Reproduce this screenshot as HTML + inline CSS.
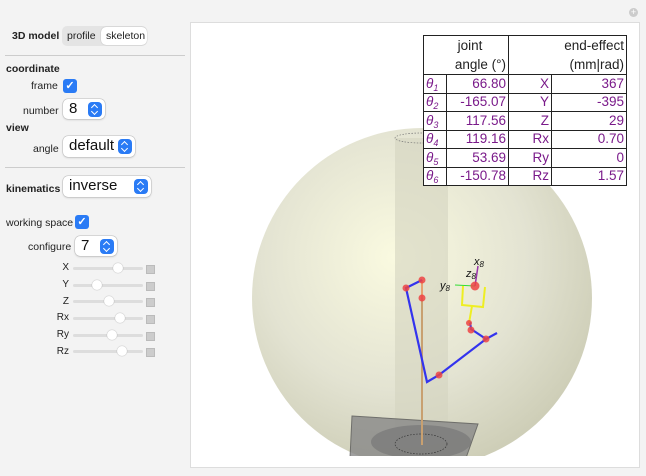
<!DOCTYPE html>
<html><head><style>
body{margin:0;width:646px;height:476px;background:#f3f3f3;font-family:"Liberation Sans",sans-serif;position:relative;overflow:hidden}
.a{position:absolute;font-size:10.5px;color:#222}
.b{font-weight:bold}
.sel{position:absolute;background:#fff;border-radius:5px;box-shadow:0 0 0 0.5px #bbb,0 1px 2px rgba(0,0,0,.15);font-size:15px;color:#111}
.sel span{position:absolute;left:6px;top:1px}
.sel i{position:absolute;right:3px;top:3px;width:14px;height:15px;background:#2a7bf5;border-radius:4px}
.sel i:before,.sel i:after{content:"";position:absolute;left:4px;width:4px;height:4px;border:solid #fff;border-width:1.3px 0 0 1.3px}
.sel i:before{top:3px;transform:rotate(45deg)}
.sel i:after{top:7px;transform:rotate(225deg)}
.cb{position:absolute;width:14px;height:14px;background:#2a7bf5;border-radius:3px;color:#fff;font-size:11px;line-height:14px;text-align:center;font-weight:bold}
.hr{position:absolute;left:5px;width:180px;height:1px;background:#ccc}
.sl{position:absolute;left:73px;width:70px;height:3px;background:#ddd;border-radius:2px}
.sl b{position:absolute;top:-4px;width:10px;height:10px;border-radius:50%;background:#fff;box-shadow:0 0 1px #888}
.pl{position:absolute;left:146px;width:7px;height:7px;background:#ccc;border:0.5px solid #bbb;}
.lb{position:absolute;font-size:10px;color:#222;text-align:right;width:20px}
table{position:absolute;left:423px;top:35px;border-collapse:collapse;font-size:13.5px;color:#7a1a8a;background:#fff}
td{border:1px solid #222;padding:0 2px;height:17.5px;text-align:right;line-height:16px}
td.t{font-style:italic;text-align:left}
sub{font-size:9px;line-height:0;vertical-align:-3px}
</style></head><body>
<div class="a b" style="left:12px;top:30px">3D model</div>
<div style="position:absolute;left:62px;top:26px;width:85px;height:20px;background:#e4e4e4;border-radius:5px"></div>
<div class="a" style="left:67px;top:30px">profile</div>
<div style="position:absolute;left:101px;top:27px;width:46px;height:18px;background:#fff;border-radius:5px;box-shadow:0 0 1px #999"></div>
<div class="a" style="left:106px;top:30px">skeleton</div>
<div class="hr" style="top:55px"></div>
<div class="a b" style="left:6px;top:63px">coordinate</div>
<div class="a" style="left:31px;top:80px">frame</div>
<div class="cb" style="left:63px;top:79px">✓</div>
<div class="a" style="left:23px;top:105px">number</div>
<div class="sel" style="left:63px;top:99px;width:42px;height:20px"><span>8</span><i></i></div>
<div class="a b" style="left:6px;top:122px">view</div>
<div class="a" style="left:33px;top:143px">angle</div>
<div class="sel" style="left:63px;top:136px;width:72px;height:21px"><span>default</span><i></i></div>
<div class="hr" style="top:167px"></div>
<div class="a b" style="left:6px;top:183px">kinematics</div>
<div class="sel" style="left:63px;top:176px;width:88px;height:21px"><span>inverse</span><i></i></div>
<div class="a" style="left:6px;top:217px">working space</div>
<div class="cb" style="left:75px;top:215px">✓</div>
<div class="a" style="left:28px;top:241px">configure</div>
<div class="sel" style="left:75px;top:236px;width:42px;height:20px"><span>7</span><i></i></div>
<div class="lb" style="left:49px;top:262px">X</div><div class="sl" style="top:267px"><b style="left:40px"></b></div><div class="pl" style="top:265px"></div>
<div class="lb" style="left:49px;top:279px">Y</div><div class="sl" style="top:284px"><b style="left:19px"></b></div><div class="pl" style="top:282px"></div>
<div class="lb" style="left:49px;top:296px">Z</div><div class="sl" style="top:300px"><b style="left:31px"></b></div><div class="pl" style="top:298px"></div>
<div class="lb" style="left:49px;top:312px">Rx</div><div class="sl" style="top:317px"><b style="left:42px"></b></div><div class="pl" style="top:315px"></div>
<div class="lb" style="left:49px;top:329px">Ry</div><div class="sl" style="top:334px"><b style="left:34px"></b></div><div class="pl" style="top:332px"></div>
<div class="lb" style="left:49px;top:346px">Rz</div><div class="sl" style="top:350px"><b style="left:44px"></b></div><div class="pl" style="top:348px"></div>
<div style="position:absolute;left:629px;top:8px;width:9px;height:9px;border-radius:50%;background:#ccc;color:#fff;font-size:9px;line-height:9px;text-align:center">+</div>
<div style="position:absolute;left:190px;top:22px;width:450px;height:446px;background:#fff;border:1px solid #ddd;box-sizing:border-box;overflow:hidden">
<svg width="450" height="434" viewBox="190 22 450 434" style="position:absolute;left:-1px;top:-1px">
<defs><radialGradient id="g" cx="0.42" cy="0.38" r="0.65"><stop offset="0" stop-color="#fafae0"/><stop offset="0.6" stop-color="#e3e3d2"/><stop offset="1" stop-color="#cdcdb6"/></radialGradient></defs>
<circle cx="422" cy="298" r="170" fill="url(#g)"/>
<rect x="395" y="138" width="53" height="330" fill="#d4d4c0" opacity="0.6"/>
<ellipse cx="421" cy="138" rx="26" ry="5" fill="none" stroke="#777" stroke-dasharray="1.5,1.5" stroke-width="0.7"/>
<polygon points="352,416 478,424 466,458 350,458" fill="#888" opacity="0.8" stroke="#555"/>
<ellipse cx="421" cy="442" rx="50" ry="17" fill="#777" opacity="0.7"/>
<ellipse cx="421" cy="444" rx="26" ry="10" fill="none" stroke="#333" stroke-dasharray="1.5,1.5" stroke-width="0.7"/>
<line x1="422" y1="298" x2="422" y2="445" stroke="#c8a070" stroke-width="2"/>
<line x1="422" y1="280" x2="422" y2="298" stroke="#e8a070" stroke-width="2"/>
<polyline points="422,280 406,288 427,382 439,375 486,339 497,333" fill="none" stroke="#3333ee" stroke-width="2.2"/>
<polyline points="486,339 471,329 470,322" fill="none" stroke="#3333ee" stroke-width="2.2"/>
<path d="M469,323 L472,306 M463,286 L462,305 L483,307 L485,287" fill="none" stroke="#eeee22" stroke-width="2"/>
<line x1="475" y1="286" x2="455" y2="285" stroke="#33dd33" stroke-width="1"/>
<line x1="475" y1="286" x2="478" y2="266" stroke="#9933aa" stroke-width="1.5"/>
<g fill="#ee4444" opacity="0.85"><circle cx="422" cy="280" r="3.5"/><circle cx="406" cy="288" r="3.5"/><circle cx="422" cy="298" r="3.5"/><circle cx="439" cy="375" r="3.5"/><circle cx="486" cy="339" r="3.5"/><circle cx="471" cy="330" r="3.5"/><circle cx="469" cy="323" r="3"/><circle cx="475" cy="286" r="4.5"/></g>
<g font-size="11" font-style="italic" fill="#111" font-family="Liberation Sans"><text x="440" y="289">y<tspan font-size="8" dy="2">8</tspan></text><text x="466" y="277">z<tspan font-size="8" dy="2">8</tspan></text><text x="474" y="265">x<tspan font-size="8" dy="2">8</tspan></text></g>
</svg></div>
<table>
<tr><td colspan="2" style="height:38px;line-height:19px;color:#222"><div style="text-align:center;padding-left:8px">joint</div>angle (°)</td><td colspan="2" style="color:#222;line-height:19px">end-effect<br>(mm|rad)</td></tr>
<tr><td class="t" style="width:18px">θ<sub>1</sub></td><td style="width:57px">66.80</td><td style="width:38px">X</td><td style="width:70px">367</td></tr>
<tr><td class="t">θ<sub>2</sub></td><td>-165.07</td><td>Y</td><td>-395</td></tr>
<tr><td class="t">θ<sub>3</sub></td><td>117.56</td><td>Z</td><td>29</td></tr>
<tr><td class="t">θ<sub>4</sub></td><td>119.16</td><td>Rx</td><td>0.70</td></tr>
<tr><td class="t">θ<sub>5</sub></td><td>53.69</td><td>Ry</td><td>0</td></tr>
<tr><td class="t">θ<sub>6</sub></td><td>-150.78</td><td>Rz</td><td>1.57</td></tr>
</table>
</body></html>
